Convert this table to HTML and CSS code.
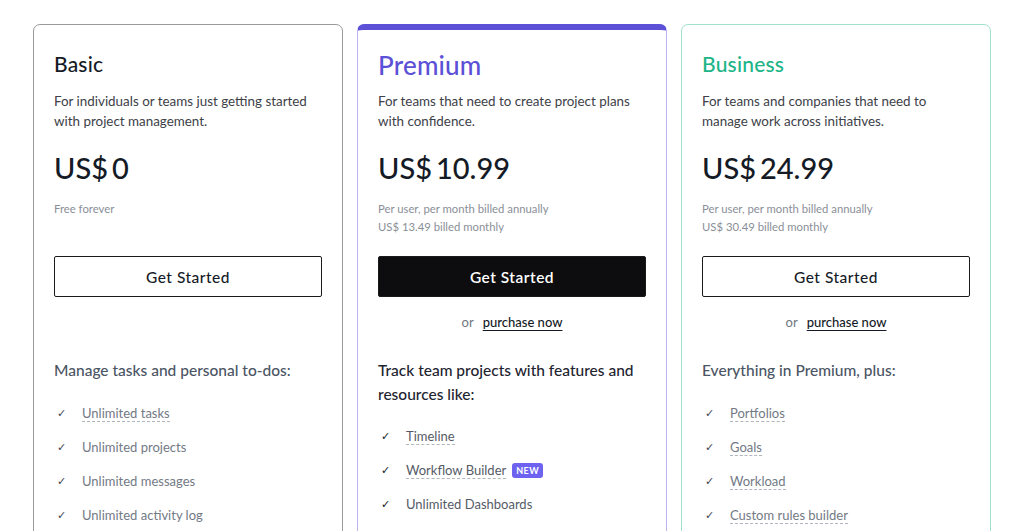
FILE: index.html
```html
<!DOCTYPE html>
<html lang="en">
<head>
<meta charset="utf-8">
<title>Pricing</title>
<link rel="stylesheet" href="styles.css">
</head>
<body>
<main class="plans">
  <section class="card card-basic">
    <h2 class="title">Basic</h2>
    <p class="desc">For individuals or teams just getting started with project management.</p>
    <div class="price">US$<span class="amount">0</span></div>
    <div class="note"><div>Free forever</div></div>
    <a class="btn">Get Started</a>
    <div class="or or-empty"></div>
    <h3 class="feat-head">Manage tasks and personal to-dos:</h3>
    <ul class="feats">
      <li><span class="chk">✓</span><span class="ft dotted">Unlimited tasks</span></li>
      <li><span class="chk">✓</span><span class="ft">Unlimited projects</span></li>
      <li><span class="chk">✓</span><span class="ft">Unlimited messages</span></li>
      <li><span class="chk">✓</span><span class="ft">Unlimited activity log</span></li>
    </ul>
  </section>
  <section class="card card-premium">
    <h2 class="title">Premium</h2>
    <p class="desc">For teams that need to create project plans with confidence.</p>
    <div class="price">US$<span class="amount">10.99</span></div>
    <div class="note"><div>Per user, per month billed annually</div><div>US$ 13.49 billed monthly</div></div>
    <a class="btn btn-dark">Get Started</a>
    <div class="or">or <a class="purchase">purchase now</a></div>
    <h3 class="feat-head">Track team projects with features and resources like:</h3>
    <ul class="feats">
      <li><span class="chk">✓</span><span class="ft dotted">Timeline</span></li>
      <li><span class="chk">✓</span><span class="ft dotted">Workflow Builder</span><span class="badge">NEW</span></li>
      <li><span class="chk">✓</span><span class="ft">Unlimited Dashboards</span></li>
    </ul>
  </section>
  <section class="card card-business">
    <h2 class="title">Business</h2>
    <p class="desc">For teams and companies that need to manage work across initiatives.</p>
    <div class="price">US$<span class="amount">24.99</span></div>
    <div class="note"><div>Per user, per month billed annually</div><div>US$ 30.49 billed monthly</div></div>
    <a class="btn">Get Started</a>
    <div class="or">or <a class="purchase">purchase now</a></div>
    <h3 class="feat-head">Everything in Premium, plus:</h3>
    <ul class="feats">
      <li><span class="chk">✓</span><span class="ft dotted">Portfolios</span></li>
      <li><span class="chk">✓</span><span class="ft dotted">Goals</span></li>
      <li><span class="chk">✓</span><span class="ft dotted">Workload</span></li>
      <li><span class="chk">✓</span><span class="ft dotted">Custom rules builder</span></li>
    </ul>
  </section>
</main>
</body>
</html>
```
FILE: styles.css
```css
* { box-sizing: border-box; }
html, body { margin: 0; padding: 0; background: #fff; }
body {
  font-family: "Lato", "Noto Sans", sans-serif;
  color: #151b26;
  height: 531px;
  overflow: hidden;
}
.plans {
  display: flex;
  justify-content: center;
  gap: 14px;
  padding-top: 24px;
}
.card {
  width: 310px;
  min-height: 560px;
  border: 1px solid #9a9a9e;
  border-radius: 7px;
  padding: 26px 20px 0 20px;
  background: #fff;
}
.card-premium {
  border-color: #b9b3ef;
  border-top: 6px solid #5b50d6;
  padding-top: 21px;
}
.card-business {
  border-color: #9fe2c9;
}
.title {
  margin: 0;
  font-size: 21px;
  font-weight: 500;
  line-height: 26px;
  letter-spacing: 0.2px;
}
.card-premium .title { color: #5b50d6; font-size: 26px; line-height: 28px; }
.card-business .title { color: #1db587; }
.desc {
  margin: 14px 0 0;
  font-size: 13.4px;
  line-height: 20px;
  color: #3d4148;
}
.card-premium .desc { margin-top: 12px; }
.price {
  margin-top: 19px;
  font-size: 29px;
  line-height: 36px;
  font-weight: 500;
  color: #151b26;
}
.amount { margin-left: 4px; }
.note {
  margin-top: 14px;
  font-size: 11.3px;
  line-height: 18px;
  color: #8a8f98;
  height: 36px;
}
.btn {
  display: flex;
  align-items: center;
  justify-content: center;
  margin-top: 20px;
  height: 41px;
  border: 1.5px solid #1a1a1a;
  border-radius: 2px;
  font-size: 15.5px;
  font-weight: 500;
  color: #151b26;
  letter-spacing: 0.5px;
}
.btn-dark {
  background: #0d0d0f;
  color: #fff;
  font-weight: 600;
}
.or {
  margin-top: 16px;
  height: 18px;
  text-align: center;
  font-size: 13px;
  line-height: 18px;
  color: #6f7782;
}
.purchase {
  margin-left: 6px;
  color: #151b26;
  font-weight: 500;
  text-decoration: underline;
  text-underline-offset: 3px;
}
.feat-head {
  margin: 27px 0 0;
  font-size: 15.5px;
  line-height: 24px;
  font-weight: 500;
  color: #4b5564;
}
.card-premium .feat-head { color: #1e2430; }
.feats {
  list-style: none;
  margin: 14px 0 0;
  padding: 0;
}
.card-premium .feats { margin-top: 13px; }
.feats li {
  display: flex;
  align-items: center;
  height: 34px;
  font-size: 13px;
  color: #737a85;
}
.chk {
  width: 28px;
  padding-left: 3px;
  font-size: 11px;
  color: #3f4653;
}
.card-premium .chk { color: #151b26; }
.card-premium .feats li { color: #555b66; }
.ft.dotted {
  border-bottom: 1px dashed #b0b5bd;
  line-height: 16px;
}
.badge {
  margin-left: 6px;
  background: #6e63f0;
  color: #fff;
  font-size: 9px;
  font-weight: 700;
  letter-spacing: 0.4px;
  padding: 2px 4px;
  border-radius: 3px;
  line-height: 11px;
}
```
